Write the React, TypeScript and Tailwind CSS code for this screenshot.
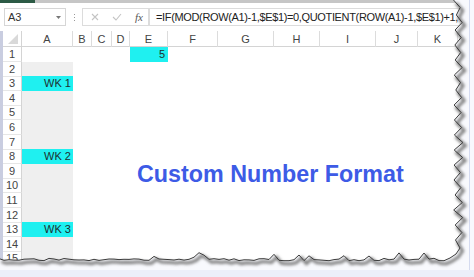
import React from "react";

const cols = ["A", "B", "C", "D", "E", "F", "G", "H", "I", "J", "K"];
const gridCols =
  "grid grid-cols-[19px_51px_19px_20px_18px_38px_50px_56px_46px_56px_42px_40px_1fr]";

function mulberry(seed: number) {
  return () => {
    seed |= 0;
    seed = (seed + 0x6d2b79f5) | 0;
    let t = Math.imul(seed ^ (seed >>> 15), 1 | seed);
    t = (t + Math.imul(t ^ (t >>> 7), 61 | t)) ^ t;
    return ((t ^ (t >>> 14)) >>> 0) / 4294967296;
  };
}

function buildEdge() {
  const r = mulberry(7);
  const pts: [number, number][] = [];
  for (let i = 0; i <= 32; i++) {
    const y = i * 7.5;
    const x = 458 + (i % 2 ? 3.5 : -3) + (r() - 0.5) * 3;
    pts.push([x, y]);
  }
  pts.push([460, 248]);
  pts.push([456, 254]);
  pts.push([450, 258]);
  for (let x = 444; x >= -4; x -= 5) {
    let y = 259.5 + (r() - 0.5) * 2.5;
    if (r() < 0.15) y -= 3 + r() * 3;
    pts.push([x, y]);
  }
  return pts;
}

function TornEdge() {
  const pts = buildEdge();
  const line = pts.map((p, i) => `${i ? "L" : "M"}${p[0].toFixed(1)} ${p[1].toFixed(1)}`).join(" ");
  const outside = `M474 0 ${pts.map((p) => `L${p[0].toFixed(1)} ${p[1].toFixed(1)}`).join(" ")} L0 277 L474 277 Z`;
  return (
    <svg className="absolute inset-0" width="474" height="277" viewBox="0 0 474 277">
      <defs>
        <filter id="blur" x="-10%" y="-10%" width="120%" height="120%">
          <feGaussianBlur stdDeviation="1.6" />
        </filter>
      </defs>
      <path d={outside} fill="#f8f9fd" />
      <rect x="469" y="0" width="1" height="277" fill="#d5dbf0" />
      <rect x="0" y="270" width="474" height="7" fill="#eceffa" />
      <path d={line} transform="translate(2.5 3)" fill="none" stroke="#7a7a7a" strokeWidth="3" filter="url(#blur)" />
      <path d={line} fill="none" stroke="#3c3c3c" strokeWidth="1" />
    </svg>
  );
}

const rows = Array.from({ length: 15 }, (_, i) => i + 1);

function Cell({ row, col }: { row: number; col: number }) {
  if (col === 0) {
    const wk = row === 3 ? "WK 1" : row === 8 ? "WK 2" : row === 13 ? "WK 3" : "";
    if (wk)
      return (
        <div className="bg-[#1ff0f0] text-right pr-[2px] text-[11px] leading-[14.6px] text-[#1d2f2f]">
          {wk}
        </div>
      );
    if (row >= 2) return <div className="bg-[#efefef]" />;
    return <div />;
  }
  if (col === 4 && row === 1)
    return (
      <div className="bg-[#1ff0f0] text-right pr-[3px] text-[11px] leading-[14.6px] text-[#1d2f2f]">
        5
      </div>
    );
  return <div />;
}

export default function App() {
  return (
    <div
      className="relative w-[474px] h-[277px] overflow-hidden bg-white"
      style={{ fontFamily: '"Liberation Sans", Arial, sans-serif' }}
    >
      {/* top strip */}
      <div className="flex h-[3px]">
        <div className="w-[35px] bg-[#2c5a45]" />
        <div className="flex-1 bg-[#c6c6c6]" />
      </div>

      {/* formula bar */}
      <div className="flex items-center h-[28px] pl-[4px] bg-white">
        <div className="flex items-center justify-between w-[62px] h-[18px] border border-[#d6d6d6] bg-white pl-[3px] pr-[4px]">
          <span className="text-[11px] text-[#333]">A3</span>
          <svg width="5" height="3" viewBox="0 0 5 3">
            <path d="M0 0 L5 0 L2.5 3 Z" fill="#777" />
          </svg>
        </div>
        <div className="flex flex-col gap-[2px] ml-[8px] mr-[7px]">
          <div className="w-[1px] h-[1px] bg-[#999]" />
          <div className="w-[1px] h-[1px] bg-[#999]" />
          <div className="w-[1px] h-[1px] bg-[#999]" />
        </div>
        <div className="flex items-center h-[18px] w-[67px] border border-[#dcdcdc] bg-white">
          <svg className="ml-[8px]" width="8" height="8" viewBox="0 0 8 8">
            <path d="M1 1 L7 7 M7 1 L1 7" stroke="#c4c4c4" strokeWidth="1.1" />
          </svg>
          <svg className="ml-[13px]" width="10" height="8" viewBox="0 0 10 8">
            <path d="M1 4 L4 7 L9 1" stroke="#c4c4c4" strokeWidth="1.1" fill="none" />
          </svg>
          <span
            className="ml-[13px] text-[11px] italic text-[#555]"
            style={{ fontFamily: '"Liberation Serif", serif' }}
          >
            fx
          </span>
        </div>
        <div className="flex-1 h-[18px] border border-[#dcdcdc] bg-white flex items-center pl-[6px] overflow-hidden whitespace-nowrap">
          <span className="text-[11px] text-[#222] tracking-[-0.35px]">
            =IF(MOD(ROW(A1)-1,$E$1)=0,QUOTIENT(ROW(A1)-1,$E$1)+1,"
          </span>
        </div>
      </div>

      {/* sheet */}
      <div className="border-l-[3px] border-[#c9cde0]">
        <div className={`${gridCols} h-[16px] border-b border-[#d4d4d4] bg-white`}>
          <div className="relative border-r border-[#d4d4d4]">
            <svg className="absolute left-[5px] top-[3px]" width="10" height="10" viewBox="0 0 10 10">
              <path d="M10 0 L10 10 L0 10 Z" fill="#d9d9d9" />
            </svg>
          </div>
          {cols.map((c) => (
            <div
              key={c}
              className="border-r border-[#dcdcdc] text-center text-[11px] leading-[16px] text-[#444]"
            >
              {c}
            </div>
          ))}
          <div />
        </div>
        {rows.map((r) => (
          <div key={r} className={`${gridCols} h-[14.6px]`}>
            <div className="border-r border-[#d4d4d4] border-b border-b-[#e6e6e6] text-center text-[11px] leading-[14px] text-[#444]">
              {r}
            </div>
            {cols.map((c, ci) => (
              <Cell key={c} row={r} col={ci} />
            ))}
            <div />
          </div>
        ))}
      </div>

      <div className="absolute left-[137px] top-[163px] text-[23.3px] leading-[23.3px] font-bold text-[#3d5be6] whitespace-nowrap">
        Custom Number Format
      </div>

      <TornEdge />
    </div>
  );
}
